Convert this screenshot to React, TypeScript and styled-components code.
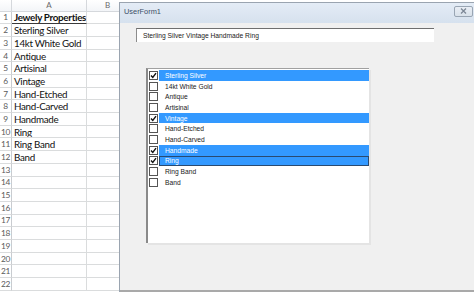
import React from "react";
import styled, { createGlobalStyle } from "styled-components";

const GlobalStyle = createGlobalStyle`
  html, body {
    margin: 0;
    padding: 0;
    background: #ffffff;
  }
`;

const Screen = styled.div`
  display: flex;
  height: 292px;
  overflow: hidden;
  width: 474px;
`;

const Sheet = styled.div`
  display: grid;
  flex: none;
  font-family: Lato, "Liberation Sans", sans-serif;
  grid-auto-rows: 12.7px;
  grid-template-columns: 12px 75px 42px;
  grid-template-rows: 11.6px;
  overflow: hidden;
  width: 119px;
`;

interface CellProps {
  bold?: boolean;
  underline?: boolean;
}

const Cell = styled.div<CellProps>`
  align-items: center;
  border-bottom: 1px solid ${p => (p.underline ? "#3a3a3a" : "#dadcdd")};
  border-right: 1px solid #dadcdd;
  box-sizing: border-box;
  color: #111111;
  display: flex;
  font-size: 9.8px;
  font-weight: ${p => (p.bold ? "bold" : "normal")};
  letter-spacing: -0.3px;
  overflow: hidden;
  padding-left: 2px;
  white-space: nowrap;
`;

const HeadCell = styled.div`
  align-items: center;
  background: linear-gradient(#ffffff, #f3f5f8);
  border-bottom: 1px solid #d5d8dc;
  border-right: 1px solid #d5d8dc;
  box-sizing: border-box;
  color: #6a6a6a;
  display: flex;
  font-size: 8px;
  justify-content: center;
`;

const RowNum = styled.div`
  align-items: center;
  background: #ffffff;
  border-bottom: 1px solid #dadcdd;
  border-right: 1px solid #c9ccd0;
  box-sizing: border-box;
  color: #5a5a5a;
  display: flex;
  font-size: 8.4px;
  justify-content: center;
  letter-spacing: -0.3px;
`;

const Window = styled.div`
  background: #dfe8f2;
  border: 1px solid #9aa4b0;
  border-bottom: none;
  border-right: none;
  box-sizing: border-box;
  display: flex;
  flex: 1;
  flex-direction: column;
  margin-top: 2px;
`;

const TitleBar = styled.div`
  align-items: center;
  background: linear-gradient(#e4ecf6, #d6e1ee);
  display: flex;
  flex: none;
  height: 20px;
  justify-content: space-between;
  padding: 0 1px 0 4px;
`;

const Title = styled.span`
  color: #3c4f66;
  font-family: "Liberation Sans", Arial, sans-serif;
  font-size: 7.4px;
  margin-top: -3px;
`;

const CloseButton = styled.div`
  align-items: center;
  background: linear-gradient(#e9eef5, #d9e1ea);
  border: 1px solid #99a5b3;
  border-radius: 2px;
  display: flex;
  height: 9px;
  justify-content: center;
  margin-top: -4px;
  width: 17px;
`;

const Body = styled.div`
  background: #f0f0f0;
  border-bottom: 2px solid #a9a9a9;
  display: flex;
  flex: 1;
  flex-direction: column;
  padding: 5px 0 0 16px;
`;

const TextBox = styled.div`
  align-items: center;
  background: #ffffff;
  border-left: 1px solid #8c8c8c;
  border-top: 1px solid #6f6f6f;
  box-sizing: border-box;
  color: #1a1a1a;
  display: flex;
  font-family: "Liberation Sans", Arial, sans-serif;
  font-size: 6.7px;
  height: 14px;
  padding-left: 6px;
  width: 298px;
`;

const ListBox = styled.div`
  background: #ffffff;
  border-left: 2px solid #8a8a8a;
  border-top: 1px solid #a0a0a0;
  box-shadow: 2px 2px 0 #e4e4e4;
  box-sizing: border-box;
  display: flex;
  flex-direction: column;
  height: 175px;
  margin: 26px 0 0 10px;
  padding-top: 1px;
  width: 223px;
`;

const Item = styled.div`
  align-items: center;
  display: flex;
  height: 10.7px;
`;

const Box = styled.div`
  align-items: center;
  border: 1px solid #555555;
  box-sizing: border-box;
  display: flex;
  flex: none;
  height: 9px;
  justify-content: center;
  margin: 0 1px;
  width: 9px;
`;

interface LabelProps {
  selected: boolean;
  focused?: boolean;
}

const Label = styled.div<LabelProps>`
  align-items: center;
  align-self: stretch;
  background: ${p => (p.selected ? "#3399ff" : "transparent")};
  box-sizing: border-box;
  color: ${p => (p.selected ? "#ffffff" : "#1a1a1a")};
  display: flex;
  flex: 1;
  font-family: "Liberation Sans", Arial, sans-serif;
  font-size: 6.7px;
  outline: ${p => (p.focused ? "1px solid #2a4a70" : "none")};
  outline-offset: -1px;
  padding-left: 6px;
`;

const rows = [
  "Jewely Properties",
  "Sterling Silver",
  "14kt White Gold",
  "Antique",
  "Artisinal",
  "Vintage",
  "Hand-Etched",
  "Hand-Carved",
  "Handmade",
  "Ring",
  "Ring Band",
  "Band",
];

const items = [
  { name: "Sterling Silver", checked: true },
  { name: "14kt White Gold", checked: false },
  { name: "Antique", checked: false },
  { name: "Artisinal", checked: false },
  { name: "Vintage", checked: true },
  { name: "Hand-Etched", checked: false },
  { name: "Hand-Carved", checked: false },
  { name: "Handmade", checked: true },
  { name: "Ring", checked: true, focused: true },
  { name: "Ring Band", checked: false },
  { name: "Band", checked: false },
];

const Check = () => (
  <svg width="7" height="7" viewBox="0 0 7 7">
    <polyline
      points="1,3.5 2.8,5.5 6,1.2"
      fill="none"
      stroke="#111111"
      strokeWidth={1.4}
    />
  </svg>
);

const App = () => {
  const numbered = Array.from({ length: 22 }, (_, i) => i + 1);

  return (
    <>
      <GlobalStyle />
      <Screen>
        <Sheet>
          <HeadCell />
          <HeadCell>A</HeadCell>
          <HeadCell>B</HeadCell>
          {numbered.map(n => (
            <React.Fragment key={n}>
              <RowNum>{n}</RowNum>
              <Cell bold={n === 1} underline={n === 1}>
                {rows[n - 1] || ""}
              </Cell>
              <Cell />
            </React.Fragment>
          ))}
        </Sheet>
        <Window>
          <TitleBar>
            <Title>UserForm1</Title>
            <CloseButton>
              <svg width="7" height="6" viewBox="0 0 7 6">
                <path
                  d="M1 0.5 L6 5.5 M6 0.5 L1 5.5"
                  stroke="#7d8896"
                  strokeWidth={1.3}
                />
              </svg>
            </CloseButton>
          </TitleBar>
          <Body>
            <TextBox>Sterling Silver Vintage Handmade Ring</TextBox>
            <ListBox>
              {items.map(item => (
                <Item key={item.name}>
                  <Box>{item.checked && <Check />}</Box>
                  <Label selected={item.checked} focused={item.focused}>
                    {item.name}
                  </Label>
                </Item>
              ))}
            </ListBox>
          </Body>
        </Window>
      </Screen>
    </>
  );
};

export default App;
